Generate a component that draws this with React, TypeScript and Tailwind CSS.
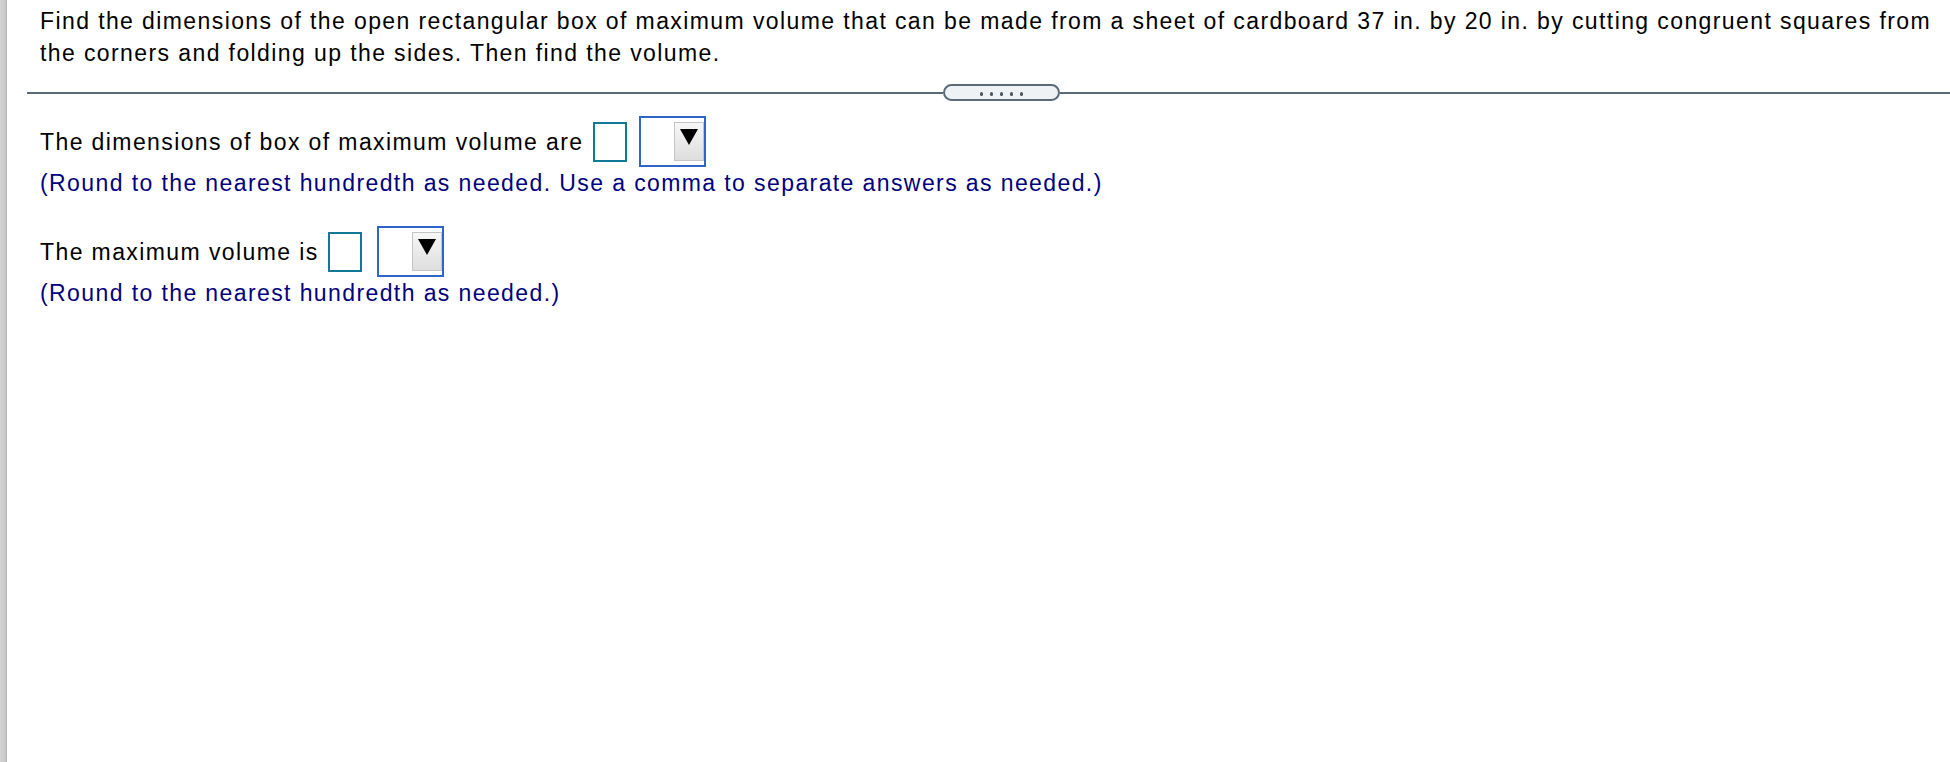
import React from "react";

const FONT = "font-['Liberation_Sans',Arial,sans-serif]";

function TextBox() {
  return <div className="h-[40px] w-[34px] shrink-0 border-2 border-[#107a96] bg-white" />;
}

function UnitSelect() {
  return (
    <div className="flex h-[51px] w-[67px] shrink-0 items-center justify-end border-2 border-[#2d66c8] bg-white">
      <div className="flex h-[39px] w-[30px] items-start justify-center border border-[#c4c4c4] bg-gradient-to-b from-[#f7f7f7] to-[#dedede] pt-[6px]">
        <svg width="20" height="16" viewBox="0 0 20 16">
          <polygon points="1,0 19,0 10,16" fill="#000" />
        </svg>
      </div>
    </div>
  );
}

export default function App() {
  return (
    <div className={`flex h-[762px] bg-white ${FONT} text-[23px] leading-[32px] tracking-[1.4px]`}>
      <div className="w-[7px] shrink-0 border-r border-[#b4b4b4] bg-gradient-to-r from-[#d4d4d4] to-[#c6c6c6]" />

      <div className="flex min-w-0 flex-1 flex-col pl-[20px]">
        <p className="whitespace-nowrap pl-[13px] pt-[5px] text-black">
          Find the dimensions of the open rectangular box of maximum volume that can be made from a sheet of
          cardboard 37 in. by 20 in. by cutting congruent squares from
          <br />
          the corners and folding up the sides. Then find the volume.
        </p>

        <div className="mt-[15px] flex h-[17px] items-center">
          <div className="h-[2px] w-[916px] bg-[#5b6a78]" />
          <div className="flex h-[17px] w-[117px] items-center justify-center gap-[7px] rounded-full border-2 border-[#5b6a78] bg-[#eef2f4] pt-[2px]">
            <span className="h-[4px] w-[3px] rounded-full bg-[#4a5662]" />
            <span className="h-[4px] w-[3px] rounded-full bg-[#4a5662]" />
            <span className="h-[4px] w-[3px] rounded-full bg-[#4a5662]" />
            <span className="h-[4px] w-[3px] rounded-full bg-[#4a5662]" />
            <span className="h-[4px] w-[3px] rounded-full bg-[#4a5662]" />
          </div>
          <div className="h-[2px] flex-1 bg-[#5b6a78]" />
        </div>

        <div className="pl-[13px]">
          <div className="mt-[15px] flex items-center">
            <span className="text-black">The dimensions of box of maximum volume are</span>
            <div className="ml-[10px]">
              <TextBox />
            </div>
            <div className="ml-[12px]">
              <UnitSelect />
            </div>
          </div>
          <p className="text-[#000080]">
            (Round to the nearest hundredth as needed. Use a comma to separate answers as needed.)
          </p>

          <div className="mt-[27px] flex items-center">
            <span className="text-black">The maximum volume is</span>
            <div className="ml-[9px]">
              <TextBox />
            </div>
            <div className="ml-[15px]">
              <UnitSelect />
            </div>
          </div>
          <p className="text-[#000080]">(Round to the nearest hundredth as needed.)</p>
        </div>
      </div>
    </div>
  );
}
